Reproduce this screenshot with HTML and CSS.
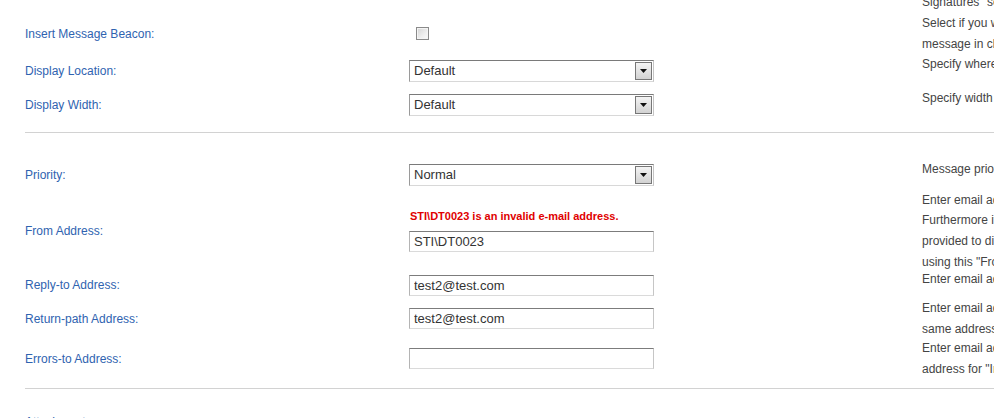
FILE: index.html
```html
<!DOCTYPE html>
<html>
<head>
<meta charset="utf-8">
<title>Message Settings</title>
<link rel="stylesheet" href="styles.css">
</head>
<body>
<div class="form">
  <div class="row r0">
    <div class="label"></div>
    <div class="ctl"></div>
    <div class="desc"><span class="ln">Signatures" section of the settings.</span></div>
  </div>
  <div class="row r1">
    <div class="label">Insert Message Beacon:</div>
    <div class="ctl"><input type="checkbox" class="chk"></div>
    <div class="desc"><span class="ln">Select if you want to insert a beacon into the</span><span class="ln">message in client view to track when it is opened.</span></div>
  </div>
  <div class="row r2">
    <div class="label">Display Location:</div>
    <div class="ctl">
      <div class="select"><span class="sel-val">Default</span><span class="sel-btn"><svg width="7" height="4" viewBox="0 0 7 4"><path d="M0 0h7L3.5 4z" fill="#111"/></svg></span></div>
    </div>
    <div class="desc up"><span class="ln">Specify where the message is displayed.</span></div>
  </div>
  <div class="row r3">
    <div class="label">Display Width:</div>
    <div class="ctl">
      <div class="select"><span class="sel-val">Default</span><span class="sel-btn"><svg width="7" height="4" viewBox="0 0 7 4"><path d="M0 0h7L3.5 4z" fill="#111"/></svg></span></div>
    </div>
    <div class="desc up"><span class="ln">Specify width of the message display.</span></div>
  </div>

  <div class="sep sep1"></div>

  <div class="row r4">
    <div class="label">Priority:</div>
    <div class="ctl">
      <div class="select"><span class="sel-val">Normal</span><span class="sel-btn"><svg width="7" height="4" viewBox="0 0 7 4"><path d="M0 0h7L3.5 4z" fill="#111"/></svg></span></div>
    </div>
    <div class="desc up"><span class="ln">Message priority.</span></div>
  </div>
  <div class="row r5">
    <div class="label">From Address:</div>
    <div class="ctl stack">
      <div class="err">STI\DT0023 is an invalid e-mail address.</div>
      <input type="text" class="txt" value="STI\DT0023">
    </div>
    <div class="desc"><span class="ln">Enter email address the message is sent from.</span><span class="ln">Furthermore it is the address that will be</span><span class="ln">provided to display on the recipients' side</span><span class="ln">using this "From" field.</span></div>
  </div>
  <div class="row r6">
    <div class="label">Reply-to Address:</div>
    <div class="ctl"><input type="text" class="txt" value="test2@test.com"></div>
    <div class="desc up"><span class="ln">Enter email address for replies.</span></div>
  </div>
  <div class="row r7">
    <div class="label">Return-path Address:</div>
    <div class="ctl"><input type="text" class="txt" value="test2@test.com"></div>
    <div class="desc"><span class="ln">Enter email address for bounces, or the</span><span class="ln">same address as the sender.</span></div>
  </div>
  <div class="row r8">
    <div class="label">Errors-to Address:</div>
    <div class="ctl"><input type="text" class="txt" value=""></div>
    <div class="desc"><span class="ln">Enter email address for errors, or the same</span><span class="ln">address for "In reply to" header.</span></div>
  </div>

  <div class="sep sep2"></div>

  <div class="row r9">
    <div class="label">Attachments:</div>
    <div class="ctl"></div>
    <div class="desc"></div>
  </div>
</div>
</body>
</html>
```

FILE: styles.css
```css
html, body {
  margin: 0;
  padding: 0;
  background: #ffffff;
  overflow: hidden;
}

body {
  font-family: "Liberation Sans", Arial, sans-serif;
  font-size: 12px;
}

.form {
  width: 1400px;
  margin-top: -8px;
  padding-left: 25px;
}

.row {
  display: flex;
  align-items: center;
}

.label {
  flex: none;
  width: 384px;
  color: #2f63b0;
  font-size: 12px;
}

.ctl {
  flex: none;
  width: 513px;
  display: flex;
  align-items: center;
}

.ctl.stack {
  flex-direction: column;
  align-items: flex-start;
}

.desc {
  flex: none;
  width: 400px;
  color: #444444;
  font-size: 12px;
  line-height: 20.6px;
}

.desc.up {
  margin-bottom: 12px;
}

.ln {
  display: block;
  white-space: nowrap;
}

.r0 { height: 21px; }
.r1 { height: 41px; }
.r2 { height: 33px; }
.r3 { height: 35px; }
.r4 { height: 28px; }
.r5 { height: 84px; }
.r6 { height: 24px; }
.r7 { height: 43px; }
.r8 { height: 37px; }
.r9 { height: 30px; }

.sep {
  height: 1px;
  background: #d2d2d2;
}

.sep1 {
  margin-top: 10px;
  margin-bottom: 28px;
}

.sep2 {
  margin-top: 11px;
  margin-bottom: 18px;
}

/* checkbox */
.chk {
  appearance: none;
  -webkit-appearance: none;
  width: 13px;
  height: 13px;
  margin: 0 0 0 7px;
  box-sizing: border-box;
  border: 1px solid #8a8a8a;
  background: linear-gradient(135deg, #d4d4d4 0%, #eeeeee 60%, #fafafa 100%);
  box-shadow: inset 0 0 0 1px #f4f4f4;
}

/* select */
.select {
  display: flex;
  width: 245px;
  height: 22px;
  box-sizing: border-box;
  border: 1px solid;
  border-color: #7a7a7a #c4c4c4 #d8d8d8 #9a9a9a;
  background: #ffffff;
}

.sel-val {
  flex: 1;
  padding-left: 4px;
  font-size: 13px;
  line-height: 20px;
  color: #333333;
}

.sel-btn {
  flex: none;
  width: 17px;
  margin: 1px 1px 1px 0;
  box-sizing: border-box;
  border: 1px solid #777777;
  background: linear-gradient(#f4f4f4, #d2d2d2);
  display: flex;
  align-items: center;
  justify-content: center;
}

.sel-btn svg {
  display: block;
}

/* text inputs */
.txt {
  width: 245px;
  height: 21px;
  box-sizing: border-box;
  margin: 0;
  padding: 0 0 0 4px;
  border: 1px solid;
  border-color: #7c7c7c #c6c6c6 #dadada #b4b4b4;
  font-family: "Liberation Sans", Arial, sans-serif;
  font-size: 13px;
  color: #333333;
  background: #ffffff;
  outline: none;
}

.err {
  color: #e00000;
  font-weight: bold;
  font-size: 11px;
  line-height: 13px;
  margin: 0 0 8px 1px;
}
```
